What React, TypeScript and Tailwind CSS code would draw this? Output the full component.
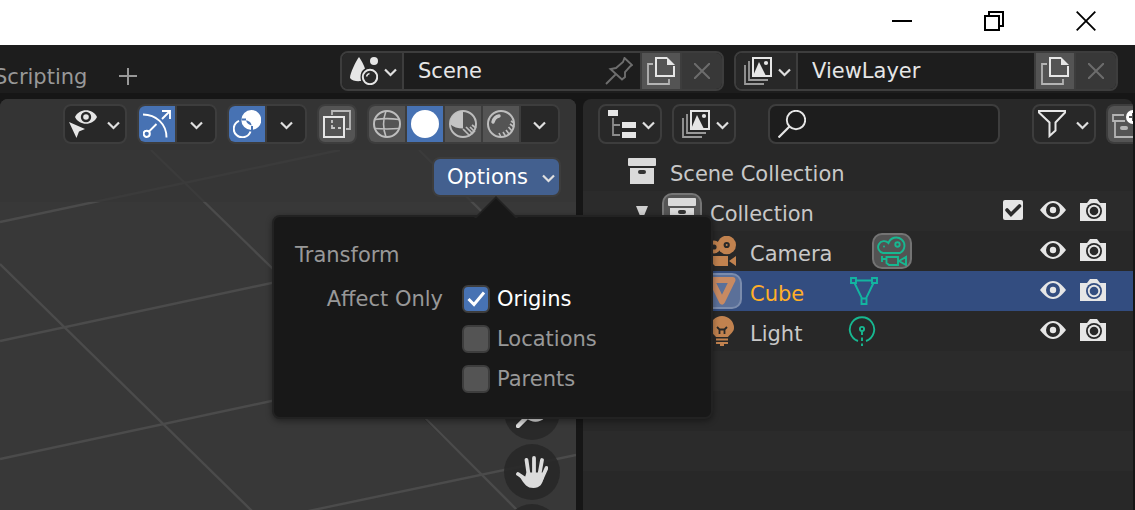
import { useState, type ReactNode } from "react";
import clsx from "clsx";

type IconProps = { className?: string };

function Icon({ className, children }: IconProps & { children: ReactNode }) {
  return (
    <svg
      viewBox="0 0 28 28"
      fill="none"
      aria-hidden="true"
      className={clsx("size-7 shrink-0", className)}
    >
      {children}
    </svg>
  );
}

function Chevron() {
  return (
    <svg
      viewBox="0 0 13 12"
      fill="none"
      aria-hidden="true"
      className="h-3 w-[13px] shrink-0 text-[#e0e0e0]"
    >
      <path d="M1 4.500l5.500 5.500L12 4.500" stroke="currentColor" strokeWidth="2.200" />
    </svg>
  );
}

function SceneIcon() {
  return (
    <Icon>
      <path
        d="M9 0C11 3 14 8 15 11.500C12 13 10.500 16 10.500 20C10.500 22 11 23 11 24C7 24.500 2 24 0 21C0 16 6 4 9 0Z"
        fill="#e6e6e6"
      />
      <circle cx="24" cy="4" r="4" fill="#e6e6e6" />
      <circle cx="20" cy="20" r="7.200" stroke="#e6e6e6" strokeWidth="2" />
      <path d="M16.500 19.500A4 4 0 0 1 19.500 16.500" stroke="#e6e6e6" strokeWidth="1.500" />
    </Icon>
  );
}

function LayersIcon() {
  return (
    <Icon>
      <path d="M1 8V27H20M5 4V23H24" stroke="#9a9a9a" strokeWidth="1.800" />
      <rect x="9" y="1" width="18" height="18" stroke="#e6e6e6" strokeWidth="2" />
      <path d="M9 19L15 5L22 19Z" fill="#e6e6e6" />
      <circle cx="22" cy="6" r="2.100" fill="#e6e6e6" />
    </Icon>
  );
}

function CopyIcon() {
  return (
    <Icon>
      <path d="M6 7H1V27H22V22" stroke="#b4b4b4" strokeWidth="1.800" />
      <path d="M20 1H9V19H27V9" stroke="#e6e6e6" strokeWidth="2" />
      <path d="M20 0L28 8H20Z" fill="#e6e6e6" />
    </Icon>
  );
}

function PinIcon() {
  return (
    <Icon>
      <path
        d="M1 27L10.500 17.500M19.500 1L27 8L25 9.500L20 15V20L17 22.500L5.500 12L11 11L18 5Z"
        stroke="#6e6e6e"
        strokeWidth="1.900"
      />
    </Icon>
  );
}

function CrossIcon() {
  return (
    <svg viewBox="0 0 16 16" fill="none" aria-hidden="true" className="size-4">
      <path d="M0 0L16 16M16 0L0 16" stroke="#6c6c6c" strokeWidth="2" />
    </svg>
  );
}

function VisibilityIcon() {
  return (
    <Icon>
      <path d="M6 7C10 -2 24 -2 28 7C24 16 10 16 6 7Z" fill="#e6e6e6" />
      <circle cx="17" cy="7" r="5.200" fill="#282828" />
      <circle cx="17" cy="7" r="2.800" fill="#e6e6e6" />
      <path d="M0 12L16 19L10 21.500L7.500 28Z" fill="#e6e6e6" />
    </Icon>
  );
}

function GizmoIcon() {
  return (
    <Icon>
      <path
        d="M0 4.500C13 4.500 23.500 14 23.500 27.500M19 9L26 2M19 1H27V9M6 21.500L13.500 14"
        stroke="#fff"
        strokeWidth="1.900"
      />
      <circle cx="3.700" cy="23.800" r="3.100" stroke="#fff" strokeWidth="2" />
    </Icon>
  );
}

function OverlaysIcon() {
  return (
    <Icon>
      <path
        d="M6 10.800A8.600 8.600 0 1 0 17.500 21.500"
        stroke="#fff"
        strokeWidth="2"
      />
      <circle cx="18.300" cy="10" r="10" fill="#fff" />
      <path d="M8.500 9.500H13M19 16V20.500" stroke="#4772b3" strokeWidth="2" />
      <path
        d="M13 10.500C16 10.500 18.500 13 18.500 15.500C16 15 13.500 13 13 10.500Z"
        fill="#4772b3"
      />
    </Icon>
  );
}

function XrayIcon() {
  return (
    <Icon>
      <path d="M9 5V1H27V19H23" stroke="#b9b9b9" strokeWidth="1.800" />
      <path d="M9 10V13M9 15V18H12M15 18H18" stroke="#c6c6c6" strokeWidth="1.800" />
      <rect x="1" y="7" width="20" height="20" stroke="#e6e6e6" strokeWidth="2" />
    </Icon>
  );
}

function WireframeIcon() {
  return (
    <Icon>
      <circle cx="14" cy="14" r="13" stroke="#bdbdbd" strokeWidth="2" />
      <path
        d="M13 1C10 9 10 19 13 27M2 9.500C9 8.500 19 8.500 26 9.500M2 18.500C9 19 19 19 26 18.500"
        stroke="#bdbdbd"
        strokeWidth="1.600"
      />
    </Icon>
  );
}

function SolidIcon() {
  return (
    <Icon>
      <circle cx="14" cy="14" r="14" fill="#fff" />
    </Icon>
  );
}

function MaterialIcon() {
  return (
    <Icon>
      <circle cx="14" cy="14" r="13" stroke="#bdbdbd" strokeWidth="2" />
      <path d="M14 1A13 13 0 0 0 1 14C4 17 9 18.500 14 18.500Z" fill="#c4c4c4" />
      <path
        d="M14 19L21 26M17 17L24 24M21 17L26 22M23 15L27 18"
        stroke="#bdbdbd"
        strokeWidth="1.700"
      />
    </Icon>
  );
}

function RenderedIcon() {
  return (
    <Icon>
      <circle cx="14" cy="14" r="13" stroke="#bdbdbd" strokeWidth="2" />
      <path
        d="M6 12C7 8.500 9 6.500 12 6"
        stroke="#c4c4c4"
        strokeWidth="3.400"
        strokeLinecap="round"
      />
      <path
        d="M12 23L14 27M16 22L18.500 26M19 20L22 24M21.500 17L25 21M23 14L27 17M24 11L27 13"
        stroke="#bdbdbd"
        strokeWidth="1.600"
      />
    </Icon>
  );
}

function TreeIcon() {
  return (
    <Icon>
      <path d="M5 8V25H12M5 15H12" stroke="#8c8c8c" strokeWidth="1.800" />
      <rect width="10" height="6" fill="#e6e6e6" />
      <rect x="14" y="12" width="14" height="6" fill="#e6e6e6" />
      <rect x="14" y="22" width="14" height="6" fill="#e6e6e6" />
    </Icon>
  );
}

function SearchIcon() {
  return (
    <Icon>
      <circle cx="18" cy="10" r="9.200" stroke="#e6e6e6" strokeWidth="1.900" />
      <path d="M.5 27.500L11.500 16.500" stroke="#e6e6e6" strokeWidth="2.200" />
    </Icon>
  );
}

function FilterIcon() {
  return (
    <Icon>
      <path
        d="M1 1H27V2.500L17.500 12.500V20.500L11.500 26V12.500L1 2.500Z"
        stroke="#e6e6e6"
        strokeWidth="2"
      />
    </Icon>
  );
}

function NewCollectionIcon() {
  return (
    <Icon>
      <path d="M12 5H1V11H13M3 11V27H28M21 11H28" stroke="#b4b4b4" strokeWidth="1.800" />
      <rect x="8" y="16" width="8" height="4" rx="2" fill="#b4b4b4" />
      <circle cx="21" cy="7" r="7" fill="#fff" />
      <path d="M17 7H25M21 3V11" stroke="#545454" strokeWidth="2" />
    </Icon>
  );
}

function CollectionIcon() {
  return (
    <Icon>
      <rect y="1" width="28" height="8" rx="1" fill="#dadada" />
      <path d="M2 11H26V27H2Z" fill="#dadada" />
      <rect x="10" y="13" width="8" height="4" rx="2" fill="#333" />
    </Icon>
  );
}

function CameraObjectIcon() {
  return (
    <svg viewBox="0 0 28 30" aria-hidden="true" className="h-[30px] w-7">
      <g fill="#c1824f">
        <circle cx="18.700" cy="9" r="9.300" />
        <circle cx="6" cy="11" r="6.500" />
        <path d="M5 20H20V30H7L5 28ZM21 25L28 20V30Z" />
      </g>
      <circle cx="18.700" cy="9" r="3.100" fill="#282828" />
      <circle cx="18.700" cy="9" r="1" fill="#c1824f" />
      <circle cx="6" cy="11" r="2.600" fill="#282828" />
    </svg>
  );
}

function MeshObjectIcon() {
  return (
    <Icon>
      <path
        d="M3.500 3H24.500L14 24.500Z"
        stroke="#c88a62"
        strokeWidth="6"
        strokeLinejoin="round"
      />
    </Icon>
  );
}

function LightObjectIcon() {
  return (
    <svg viewBox="0 0 28 30" aria-hidden="true" className="h-[30px] w-7">
      <path
        d="M14 0A12 12 0 0 1 26 12C26 16 22 18 20 21H8C6 18 2 16 2 12A12 12 0 0 1 14 0ZM8 22.500H20V24.500H8ZM8 26H20V28H16V30H12V28H8Z"
        fill="#c1824f"
      />
      <path
        d="M9 11L11.500 13.500H16.500L19 11M11.500 13.500V18M16.500 13.500V18"
        fill="none"
        stroke="#282828"
        strokeWidth="1.800"
      />
    </svg>
  );
}

function CameraDataIcon() {
  return (
    <svg viewBox="0 0 30 30" fill="none" aria-hidden="true" className="size-[30px]">
      <g stroke="#17b891" strokeWidth="1.900">
        <path d="M6 17A6 6 0 1 1 11.500 7A8.200 8.200 0 1 1 23 17Z" />
        <circle cx="20.500" cy="8.500" r="2.200" />
        <path d="M9.500 21H21V29H12L9.500 27ZM22 25L29 21V29ZM5 20V26M5 23H9" />
      </g>
      <circle cx="7" cy="10.500" r="1" fill="#17b891" />
    </svg>
  );
}

function MeshDataIcon() {
  return (
    <Icon>
      <path
        d="M1 1H6V6H1ZM22 1H27V6H22ZM11.500 21.500H16.500V27H11.500ZM6 3.500H22M4.500 6L12 21.500M23.500 6L16 21.500"
        stroke="#13b5a0"
        strokeWidth="1.900"
      />
    </Icon>
  );
}

function LightDataIcon() {
  return (
    <svg viewBox="0 0 28 30" fill="none" aria-hidden="true" className="h-[30px] w-7">
      <g stroke="#17b891" strokeWidth="1.900">
        <path d="M10 25A12.200 12.200 0 1 1 18 25" />
        <circle cx="14" cy="13" r="2.100" />
        <path d="M14 15.500V30" strokeDasharray="3.500 2.500" />
      </g>
    </svg>
  );
}

// `cut` is the row colour, which shows through the rings of the glyph
function EyeIcon({ cut }: { cut: string }) {
  return (
    <svg viewBox="0 0 26 20" aria-hidden="true" className="h-5 w-[26px]">
      <path
        d="M0 10C3 6 7.500 1 13 1C18.500 1 23 6 26 10C23 14 18.500 19 13 19C7.500 19 3 14 0 10Z"
        fill="#e6e6e6"
      />
      <circle cx="13" cy="10" r="7" className={cut} />
      <circle cx="13" cy="10" r="3.200" fill="#e6e6e6" />
    </svg>
  );
}

function RenderIcon({ cut }: { cut: string }) {
  return (
    <svg viewBox="0 0 26 22" aria-hidden="true" className="h-[22px] w-[26px]">
      <path d="M0 4H7L10 0H17L20 4H26V22H0Z" fill="#e6e6e6" />
      <circle cx="14" cy="12" r="8" className={cut} />
      <circle cx="14" cy="12" r="6.200" fill="#e6e6e6" />
      <circle cx="14" cy="12" r="4.300" className={cut} />
    </svg>
  );
}

const GROUP =
  "flex h-10 shrink-0 divide-x-2 divide-[#3d3d3d] overflow-hidden rounded-lg border-2 border-[#3d3d3d]";
const SEGMENT = "flex items-center justify-center";

function TitleBar() {
  return (
    <div className="flex h-[45px] shrink-0 items-start justify-end bg-white pr-[3px] text-black">
      <button type="button" aria-label="Minimize" className="flex h-10 w-[92px] items-center justify-center">
        <svg viewBox="0 0 20 20" className="size-5" aria-hidden="true">
          <path d="M0 11H20" stroke="currentColor" strokeWidth="2" />
        </svg>
      </button>
      <button type="button" aria-label="Restore" className="flex h-[42px] w-[92px] items-center justify-center">
        <svg viewBox="0 0 20 20" fill="none" className="size-5" aria-hidden="true">
          <path d="M1 5H15V19H1ZM5 5V1H19V15H15" stroke="currentColor" strokeWidth="2" />
        </svg>
      </button>
      <button type="button" aria-label="Close" className="flex h-[42px] w-[92px] items-center justify-center">
        <svg viewBox="0 0 20 20" className="size-5" aria-hidden="true">
          <path d="M.7 .7L19.300 19.300M19.300 .7L.7 19.300" stroke="currentColor" strokeWidth="1.800" />
        </svg>
      </button>
    </div>
  );
}

function DataBlock({
  label,
  icon,
  initial,
  pinned,
}: {
  label: string;
  icon: ReactNode;
  initial: string;
  pinned?: boolean;
}) {
  const [name, setName] = useState(initial);

  return (
    <div className={clsx(GROUP, "w-96")}>
      <button
        type="button"
        aria-label={`Browse ${label}`}
        className="flex w-[62px] shrink-0 items-center gap-1.5 bg-[#282828] pl-2"
      >
        {icon}
        <Chevron />
      </button>
      <div className="flex min-w-0 flex-1 items-center bg-[#1d1d1d] pr-[7px]">
        <input
          aria-label={`${label} name`}
          value={name}
          onChange={(e) => setName(e.target.value)}
          className="h-9 min-w-0 flex-1 bg-transparent pl-3.5 text-[#e6e6e6] outline-none"
        />
        {pinned && (
          <button type="button" aria-label="Pin scene">
            <PinIcon />
          </button>
        )}
      </div>
      <button
        type="button"
        aria-label={`New ${label}`}
        className={clsx(SEGMENT, "w-10 bg-[#545454]")}
      >
        <CopyIcon />
      </button>
      <button
        type="button"
        aria-label={`Remove ${label}`}
        className={clsx(SEGMENT, "w-10 bg-[#383838]")}
      >
        <CrossIcon />
      </button>
    </div>
  );
}

function TopBar() {
  return (
    <header className="flex h-12 shrink-0 items-center justify-between bg-[#1d1d1d] pt-1 pr-[17px]">
      <nav className="-ml-1.5 flex items-center gap-8 pt-3 text-[#989898]">
        <button type="button">Scripting</button>
        <button type="button" aria-label="Add workspace">
          <svg viewBox="0 0 18 18" className="size-[18px]" aria-hidden="true">
            <path d="M0 8H18M9 -1V17" stroke="currentColor" strokeWidth="2" />
          </svg>
        </button>
      </nav>
      <div className="flex gap-2.5">
        <DataBlock label="scene" icon={<SceneIcon />} initial="Scene" pinned />
        <DataBlock label="view layer" icon={<LayersIcon />} initial="ViewLayer" />
      </div>
    </header>
  );
}

function ToggleWithMenu({ label, icon }: { label: string; icon: ReactNode }) {
  return (
    <div className={GROUP}>
      <button
        type="button"
        aria-label={label}
        aria-pressed="true"
        className={clsx(SEGMENT, "w-[38px] bg-[#4772b3]")}
      >
        {icon}
      </button>
      <button
        type="button"
        aria-label={`${label} options`}
        className={clsx(SEGMENT, "w-[38px] bg-[#282828]")}
      >
        <Chevron />
      </button>
    </div>
  );
}

const SHADING_MODES = [
  { name: "Wireframe", icon: <WireframeIcon /> },
  { name: "Solid", icon: <SolidIcon /> },
  { name: "Material preview", icon: <MaterialIcon /> },
  { name: "Rendered", icon: <RenderedIcon /> },
];

function ViewportHeader() {
  const [mode, setMode] = useState("Solid");

  return (
    <div className="relative flex h-[51px] items-start justify-end gap-2.5 bg-[#343434] pt-[5px] pr-4">
      <button
        type="button"
        aria-label="Object types visibility"
        className="flex h-10 w-16 shrink-0 items-center gap-2.5 rounded-lg border-2 border-[#3d3d3d] bg-[#282828] pl-1"
      >
        <VisibilityIcon />
        <Chevron />
      </button>
      <ToggleWithMenu label="Gizmos" icon={<GizmoIcon />} />
      <ToggleWithMenu label="Overlays" icon={<OverlaysIcon />} />
      <button
        type="button"
        aria-label="Toggle X-ray"
        className="flex size-10 shrink-0 items-center justify-center rounded-lg border-2 border-[#3d3d3d] bg-[#545454]"
      >
        <XrayIcon />
      </button>
      <div className={GROUP}>
        {SHADING_MODES.map(({ name, icon }) => (
          <button
            key={name}
            type="button"
            aria-label={name}
            aria-pressed={mode === name}
            onClick={() => setMode(name)}
            className={clsx(
              SEGMENT,
              "w-[38px]",
              mode === name ? "bg-[#4772b3]" : "bg-[#545454]",
            )}
          >
            {icon}
          </button>
        ))}
        <button
          type="button"
          aria-label="Shading options"
          className={clsx(SEGMENT, "w-[37px] bg-[#282828]")}
        >
          <Chevron />
        </button>
      </div>
    </div>
  );
}

function TransformPopover() {
  const [affect, setAffect] = useState({
    Origins: true,
    Locations: false,
    Parents: false,
  });
  const names = Object.keys(affect) as (keyof typeof affect)[];

  return (
    <div className="absolute top-full -right-[152px] z-20 mt-[18px] w-[441px] rounded-lg border-2 border-[#222] bg-[#181818] py-[18px] pl-[21px] text-[#989898] shadow-[0_2px_6px_rgba(0,0,0,0.4)]">
      <svg
        viewBox="0 0 44 22"
        aria-hidden="true"
        className="absolute -top-[21px] right-[193px] h-[22px] w-11"
      >
        <path d="M0 22L22 0L44 22Z" fill="#222" />
        <path d="M2.500 22L22 2.500L41.500 22Z" fill="#181818" />
      </svg>
      <h2 className="mb-1 leading-10">Transform</h2>
      <fieldset className="flex gap-[19px]">
        <legend className="float-left w-[148px] text-right leading-10">Affect Only</legend>
        <div>
          {names.map((name) => (
            <label
              key={name}
              className={clsx("flex h-10 items-center gap-[7px]", affect[name] && "text-white")}
            >
              <span className="relative flex size-7">
                <input
                  type="checkbox"
                  checked={affect[name]}
                  onChange={() => setAffect({ ...affect, [name]: !affect[name] })}
                  className="size-7 appearance-none rounded-md border-2 border-[#3d3d3d] bg-[#545454] checked:bg-[#4772b3]"
                />
                {affect[name] && (
                  <svg
                    viewBox="0 0 28 28"
                    fill="none"
                    aria-hidden="true"
                    className="pointer-events-none absolute inset-0 size-7"
                  >
                    <path d="M6.500 14L12 19.500L22 7.500" stroke="#fff" strokeWidth="3" />
                  </svg>
                )}
              </span>
              {name}
            </label>
          ))}
        </div>
      </fieldset>
    </div>
  );
}

function Viewport() {
  return (
    <section className="relative min-w-0 flex-1 rounded-t-lg bg-[#383838]">
      <div className="absolute inset-0 overflow-hidden">
        <svg aria-hidden="true" className="size-full" stroke="#4b4b4b" strokeWidth="2.400">
          <path d="M0 123L340 51M0 242L576 119M0 360L576 237M280 418L576 356" />
          <path d="M151 51L273 170L427 321L524 418M0 165L254 414M419 51L576 205" />
        </svg>
      </div>
      <div className="absolute top-[285px] right-4 flex h-[126px] flex-col gap-1 overflow-hidden">
        <button
          type="button"
          aria-label="Zoom view"
          className="flex size-14 shrink-0 items-center justify-center rounded-full bg-[#282828]/90"
        >
          <svg viewBox="0 0 32 32" fill="none" className="size-8" aria-hidden="true">
            <circle cx="19.500" cy="13" r="11" stroke="#dcdcdc" strokeWidth="3.400" />
            <path d="M2 30L12 20" stroke="#dcdcdc" strokeWidth="4.500" strokeLinecap="round" />
          </svg>
        </button>
        <button
          type="button"
          aria-label="Move view"
          className="flex size-14 shrink-0 items-center justify-center rounded-full bg-[#282828]/90"
        >
          <svg viewBox="0 0 32 32" fill="none" className="size-8" aria-hidden="true">
            <path
              d="M10.500 4L12.500 18M18 2V18M26 4L23.500 18M30.500 12L26 22M2 18L8 22"
              stroke="#dcdcdc"
              strokeWidth="3.800"
              strokeLinecap="round"
            />
            <path
              d="M10.500 16.500H26.500L28 21C26.500 28 24 32 17.500 32C11 32 9 29 3 20L9 21Z"
              fill="#dcdcdc"
            />
          </svg>
        </button>
        <button
          type="button"
          aria-label="Camera view"
          className="size-14 shrink-0 rounded-full bg-[#282828]/90"
        />
      </div>
      <div className="overflow-hidden rounded-t-lg">
        <ViewportHeader />
      </div>
      <div className="relative flex h-[52px] items-start justify-end bg-[#353535]/75 pt-[7px] pr-[15px]">
        <div className="relative">
          <button
            type="button"
            aria-expanded="true"
            className="flex h-10 w-[129px] items-center justify-between rounded-lg border-2 border-[#3d3d3d] bg-[#43608f] pr-1 pl-[13px] text-white"
          >
            Options
            <Chevron />
          </button>
          <TransformPopover />
        </div>
      </div>
    </section>
  );
}

function OutlinerHeader() {
  const menu =
    "flex h-10 w-16 shrink-0 items-center rounded-lg border-2 border-[#3d3d3d] bg-[#282828]";

  return (
    <div className="flex h-[52px] items-start gap-2.5 pt-[5px] pl-[15px]">
      <button type="button" aria-label="Editor type" className={clsx(menu, "gap-1.5 pl-2")}>
        <TreeIcon />
        <Chevron />
      </button>
      <button type="button" aria-label="Display mode" className={clsx(menu, "gap-1.5 pl-2")}>
        <LayersIcon />
        <Chevron />
      </button>
      <label className="mx-[22px] flex h-10 min-w-0 flex-1 items-center gap-2 rounded-lg border-2 border-[#3d3d3d] bg-[#1d1d1d] pl-2">
        <SearchIcon />
        <input
          type="search"
          aria-label="Filter outliner"
          className="h-9 min-w-0 flex-1 bg-transparent text-[#e6e6e6] outline-none"
        />
      </label>
      <button type="button" aria-label="Filter" className={clsx(menu, "gap-2.5 pl-1")}>
        <FilterIcon />
        <Chevron />
      </button>
      <button
        type="button"
        aria-label="New collection"
        className="flex h-10 w-[27px] shrink-0 items-center overflow-hidden rounded-l-lg border-2 border-r-0 border-[#3d3d3d] bg-[#545454] pl-1"
      >
        <NewCollectionIcon />
      </button>
    </div>
  );
}

type TreeItem = {
  name: string;
  depth: string;
  icon: ReactNode;
  data?: ReactNode;
  boxed?: boolean;
  dataBoxed?: boolean;
  selected?: boolean;
  open?: boolean;
  toggles?: boolean;
};

const TREE: TreeItem[] = [
  { name: "Scene Collection", depth: "pl-[39px]", icon: <CollectionIcon /> },
  {
    name: "Collection",
    depth: "pl-[39px]",
    icon: <CollectionIcon />,
    boxed: true,
    open: true,
    toggles: true,
  },
  {
    name: "Camera",
    depth: "pl-[119px]",
    icon: <CameraObjectIcon />,
    data: <CameraDataIcon />,
    dataBoxed: true,
    toggles: true,
  },
  {
    name: "Cube",
    depth: "pl-[119px]",
    icon: <MeshObjectIcon />,
    data: <MeshDataIcon />,
    boxed: true,
    selected: true,
    toggles: true,
  },
  {
    name: "Light",
    depth: "pl-[119px]",
    icon: <LightObjectIcon />,
    data: <LightDataIcon />,
    toggles: true,
  },
];

function TreeRow({ item }: { item: TreeItem }) {
  const cut = item.selected ? "fill-[#334d80]" : "fill-[#282828]";
  const chip = "flex h-9 w-10 shrink-0 items-center justify-center rounded-[10px]";
  const chipOn = "border-2 border-white/20 bg-white/20";

  return (
    <li className={clsx("flex h-10 items-center pr-5", item.depth, item.selected && "bg-[#334d80]")}>
      {item.open && (
        <button type="button" aria-label="Collapse" className="flex w-10 justify-center">
          <svg viewBox="0 0 12 12" className="size-3" aria-hidden="true">
            <path d="M0 1H12L7.500 12H4.500Z" fill="#cfcfcf" />
          </svg>
        </button>
      )}
      <span className={clsx(chip, item.boxed && chipOn)}>{item.icon}</span>
      <span className={clsx("pt-1.5 pl-2", item.selected ? "text-[#ffaf29]" : "text-[#c8c8c8]")}>
        {item.name}
      </span>
      {item.data && (
        <span className={clsx("ml-10", chip, item.dataBoxed && chipOn)}>{item.data}</span>
      )}
      {item.toggles && (
        <div className="ml-auto flex pb-0.5">
          {item.open && (
            <span className="relative flex w-10 items-center justify-center">
              <input
                type="checkbox"
                defaultChecked
                aria-label="Include in view layer"
                className="peer size-5 appearance-none rounded-xs bg-[#e6e6e6]"
              />
              <svg
                viewBox="0 0 20 20"
                fill="none"
                aria-hidden="true"
                className="pointer-events-none absolute hidden size-5 peer-checked:block"
              >
                <path
                  d="M4 10L8 14.500L16.500 6"
                  stroke="#2b2b2b"
                  strokeWidth="3.600"
                  strokeLinecap="round"
                />
              </svg>
            </span>
          )}
          <button
            type="button"
            aria-label={`Hide ${item.name}`}
            className="flex w-10 items-center justify-center"
          >
            <EyeIcon cut={cut} />
          </button>
          <button
            type="button"
            aria-label={`Disable ${item.name} in renders`}
            className="flex w-10 items-center justify-center"
          >
            <RenderIcon cut={cut} />
          </button>
        </div>
      )}
    </li>
  );
}

function Outliner() {
  return (
    <aside className="flex w-[550px] shrink-0 flex-col overflow-hidden rounded-t-lg bg-[#282828]">
      <OutlinerHeader />
      <ul className="flex-1 bg-[repeating-linear-gradient(#282828_0_40px,#2b2b2b_40px_80px)]">
        {TREE.map((item) => (
          <TreeRow key={item.name} item={item} />
        ))}
      </ul>
    </aside>
  );
}

export default function App() {
  return (
    <div className="flex h-screen flex-col overflow-hidden bg-[#161616] font-['DejaVu_Sans',sans-serif] text-[21px] leading-7">
      <TitleBar />
      <TopBar />
      <main className="flex min-h-0 flex-1 gap-[7px] pt-1.5 pr-0.5">
        <Viewport />
        <Outliner />
      </main>
    </div>
  );
}
